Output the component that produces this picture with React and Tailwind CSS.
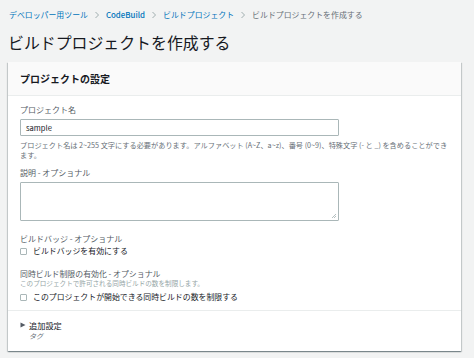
import React from 'react';

const font = { fontFamily: '"Noto Sans CJK JP", "Noto Sans", sans-serif' };

function Crumb({ children, bold }) {
  return (
    <span className={`text-[#0073bb] ${bold ? 'font-medium' : ''}`}>{children}</span>
  );
}

function Sep() {
  return (
    <svg width="6" height="8" viewBox="0 0 6 8" className="mx-[6px] shrink-0">
      <path d="M1.5 1 L4.5 4 L1.5 7" fill="none" stroke="#95a5a6" strokeWidth="0.9" />
    </svg>
  );
}

function Checkbox({ label }) {
  return (
    <label className="flex items-center h-[10px]">
      <span className="w-[7px] h-[7px] border border-[#aab7b8] rounded-[1px] bg-white shrink-0" />
      <span className="ml-[6px] text-[7.9px] leading-[10px] text-[#16191f]">{label}</span>
    </label>
  );
}

export default function App() {
  return (
    <div className="w-[474px] h-[358px] bg-[#f2f3f3] overflow-hidden" style={font}>
      <nav className="pt-[10px] px-[9px] flex items-center h-[20px] text-[7.9px] leading-[10px] whitespace-nowrap">
        <Crumb>デベロッパー用ツール</Crumb>
        <Sep />
        <Crumb bold>CodeBuild</Crumb>
        <Sep />
        <Crumb>ビルドプロジェクト</Crumb>
        <Sep />
        <span className="text-[#687078]">ビルドプロジェクトを作成する</span>
      </nav>

      <h1 className="mt-[13px] px-[8px] text-[15.9px] leading-[20px] text-[#16191f] font-normal">
        ビルドプロジェクトを作成する
      </h1>

      <div className="mt-[9px] ml-[8px] w-[453px] h-[289px] bg-white shadow-[0_1px_1px_rgba(0,28,36,0.3),1px_1px_1px_rgba(0,28,36,0.15),-1px_1px_1px_rgba(0,28,36,0.15)]">
        <div className="h-[34px] bg-[#fafafa] border-b border-[#eaeded] px-[12px] flex items-center">
          <h2 className="text-[10px] leading-[12px] font-bold text-[#16191f]">プロジェクトの設定</h2>
        </div>

        <div className="px-[12px] pt-[9px] pb-[8px] border-b border-[#eaeded]">
          <div className="text-[8px] leading-[10px] text-[#545b64]">プロジェクト名</div>
          <div className="mt-[4px] w-[319px] h-[17px] border border-[#aab7b8] rounded-[1px] px-[5px] flex items-center text-[7.6px] text-[#16191f]">
            sample
          </div>
          <p className="mt-[4px] w-[430px] text-[7.2px] leading-[10px] text-[#687078]">
            プロジェクト名は 2~255 文字にする必要があります。アルファベット (A~Z、a~z)、番号 (0~9)、特殊文字 (- と _) を含めることができます。
          </p>

          <div className="mt-[8px] text-[8px] leading-[10px] text-[#545b64]">説明 - オプショナル</div>
          <div className="mt-[4px] w-[319px] h-[39px] border border-[#aab7b8] rounded-[1px] relative">
            <svg width="6" height="6" viewBox="0 0 6 6" className="absolute right-[1px] bottom-[1px]">
              <path d="M1 5 L5 1 M3 5 L5 3" stroke="#95a5a6" strokeWidth="0.7" />
            </svg>
          </div>

          <div className="mt-[13px] text-[8px] leading-[10px] text-[#545b64]">ビルドバッジ - オプショナル</div>
          <div className="mt-[2px]">
            <Checkbox label="ビルドバッジを有効にする" />
          </div>

          <div className="mt-[13px] text-[7.9px] leading-[10px] text-[#545b64]">同時ビルド制限の有効化 - オプショナル</div>
          <div className="text-[6.6px] leading-[9px] text-[#95a5a6]">このプロジェクトで許可される同時ビルドの数を制限します。</div>
          <div className="mt-[4px]">
            <Checkbox label="このプロジェクトが開始できる同時ビルドの数を制限する" />
          </div>
        </div>

        <div className="px-[12px] pt-[9px]">
          <div className="flex items-center h-[10px]">
            <svg width="6" height="6" viewBox="0 0 6 6" className="shrink-0">
              <path d="M0.5 0.5 L5.5 3 L0.5 5.5 Z" fill="#545b64" />
            </svg>
            <span className="ml-[3px] text-[8.2px] leading-[10px] text-[#16191f]">追加設定</span>
          </div>
          <div className="ml-[9px] mt-[1px] text-[7px] leading-[10px] italic text-[#687078]">タグ</div>
        </div>
      </div>
    </div>
  );
}
